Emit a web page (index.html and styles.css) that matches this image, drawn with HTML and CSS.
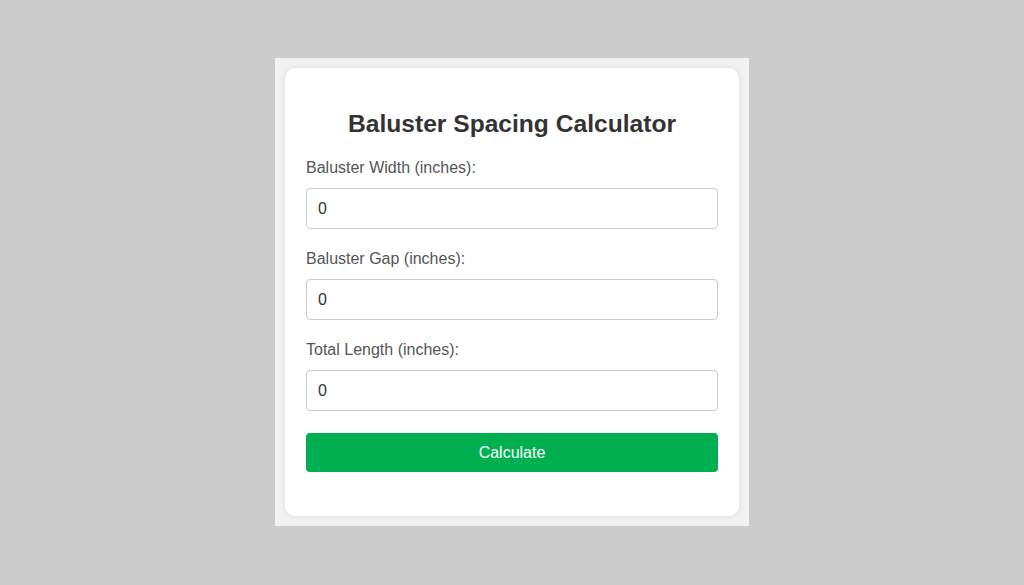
FILE: index.html
```html
<!DOCTYPE html>
<html>
<head>
<meta charset="utf-8">
<link rel="stylesheet" href="styles.css">
</head>
<body>
<div class="frame">
  <div class="card">
    <h2 class="title">Baluster Spacing Calculator</h2>
    <label class="label">Baluster Width (inches):</label>
    <input class="field" type="text" value="0">
    <label class="label">Baluster Gap (inches):</label>
    <input class="field" type="text" value="0">
    <label class="label">Total Length (inches):</label>
    <input class="field" type="text" value="0">
    <button class="btn">Calculate</button>
  </div>
</div>
</body>
</html>
```
FILE: styles.css
```css
html, body { margin: 0; padding: 0; }
body {
  background: #cccccc;
  width: 1024px;
  height: 585px;
  overflow: hidden;
  font-family: "Liberation Sans", Arial, sans-serif;
}
.frame {
  width: 474px;
  height: 468px;
  box-sizing: border-box;
  margin: 58px auto 0;
  padding: 10px;
  background: #f1f1f1;
}
.card {
  background: #ffffff;
  border-radius: 10px;
  box-shadow: 0 0 6px rgba(0,0,0,0.08);
  height: 448px;
  box-sizing: border-box;
  padding: 20px 21px;
  display: flex;
  flex-direction: column;
}
.title {
  font-size: 24.6px;
  font-weight: bold;
  color: #333333;
  text-align: center;
  margin: 22px 0 21px;
  line-height: 28px;
}
.label {
  display: block;
  font-size: 16px;
  color: #555555;
  line-height: 18px;
  margin-bottom: 11px;
}
.field {
  box-sizing: border-box;
  width: 100%;
  height: 41px;
  padding: 0 11px;
  border: 1px solid #cccccc;
  border-radius: 4px;
  font-family: "Liberation Sans", Arial, sans-serif;
  font-size: 16px;
  color: #333333;
  margin: 0 0 21px;
  background: #fff;
}
.btn {
  margin-top: 1px;
  height: 39px;
  width: 100%;
  border: none;
  border-radius: 4px;
  background: #00b050;
  color: #ffffff;
  font-family: "Liberation Sans", Arial, sans-serif;
  font-size: 16px;
}
```
